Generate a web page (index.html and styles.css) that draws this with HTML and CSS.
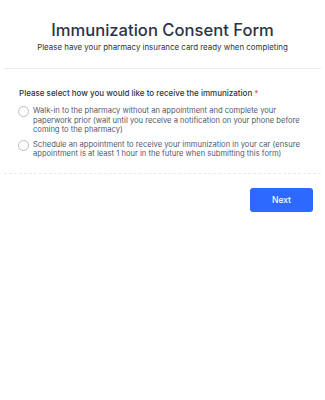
FILE: index.html
```html
<!DOCTYPE html>
<html>
<head>
  <meta charset="utf-8">
  <title>Immunization Consent Form</title>
  <link rel="stylesheet" href="styles.css">
</head>
<body>
  <div class="form">
    <div class="header">
      <h1 class="title">Immunization Consent Form</h1>
      <p class="subtitle">Please have your pharmacy insurance card ready when completing</p>
    </div>
    <div class="question">
      <div class="label">Please select how you would like to receive the immunization <span class="req">*</span></div>
      <label class="option">
        <span class="radio"></span>
        <span class="option-text">Walk-in to the pharmacy without an appointment and complete your paperwork prior (wait until you receive a notification on your phone before coming to the pharmacy)</span>
      </label>
      <label class="option">
        <span class="radio"></span>
        <span class="option-text">Schedule an appointment to receive your immunization in your car (ensure appointment is at least 1 hour in the future when submitting this form)</span>
      </label>
    </div>
    <div class="footer">
      <button type="button" class="next">Next</button>
    </div>
  </div>
</body>
</html>
```
FILE: styles.css
```css
html, body {
  margin: 0;
  padding: 0;
  background: #fff;
  font-family: Inter, 'Noto Sans', sans-serif;
  color: #2c3345;
}
.form {
  padding: 0 4px;
}
.header {
  padding: 20px 0 15px;
  text-align: center;
  border-bottom: 1px solid #eaebf2;
}
.title {
  margin: 0;
  font-size: 16.6px;
  font-weight: 500;
  line-height: 20px;
  color: #2c3345;
}
.subtitle {
  margin: 1px 0 0;
  font-size: 7.9px;
  line-height: 12px;
  color: #2c3345;
}
.question {
  padding: 18px 11px 9px 14px;
  border-bottom: 1px dashed #eaebf2;
}
.label {
  font-size: 8px;
  font-weight: 500;
  line-height: 12px;
  margin-bottom: 7px;
  padding-left: 1px;
}
.req {
  color: #f23a3c;
}
.option {
  display: flex;
  gap: 4px;
  margin-bottom: 5px;
}
.radio {
  flex: none;
  width: 9px;
  height: 9px;
  border: 1px solid #b8bdc9;
  border-radius: 50%;
}
.option-text {
  font-size: 7.6px;
  line-height: 9.6px;
  color: #4f5a70;
}
.footer {
  display: flex;
  justify-content: flex-end;
  padding: 14px 8px;
}
.next {
  width: 63px;
  height: 24px;
  border: none;
  border-radius: 3px;
  background: #2e69ff;
  color: #fff;
  font-family: Inter, sans-serif;
  font-size: 8.5px;
  font-weight: 500;
}
```
